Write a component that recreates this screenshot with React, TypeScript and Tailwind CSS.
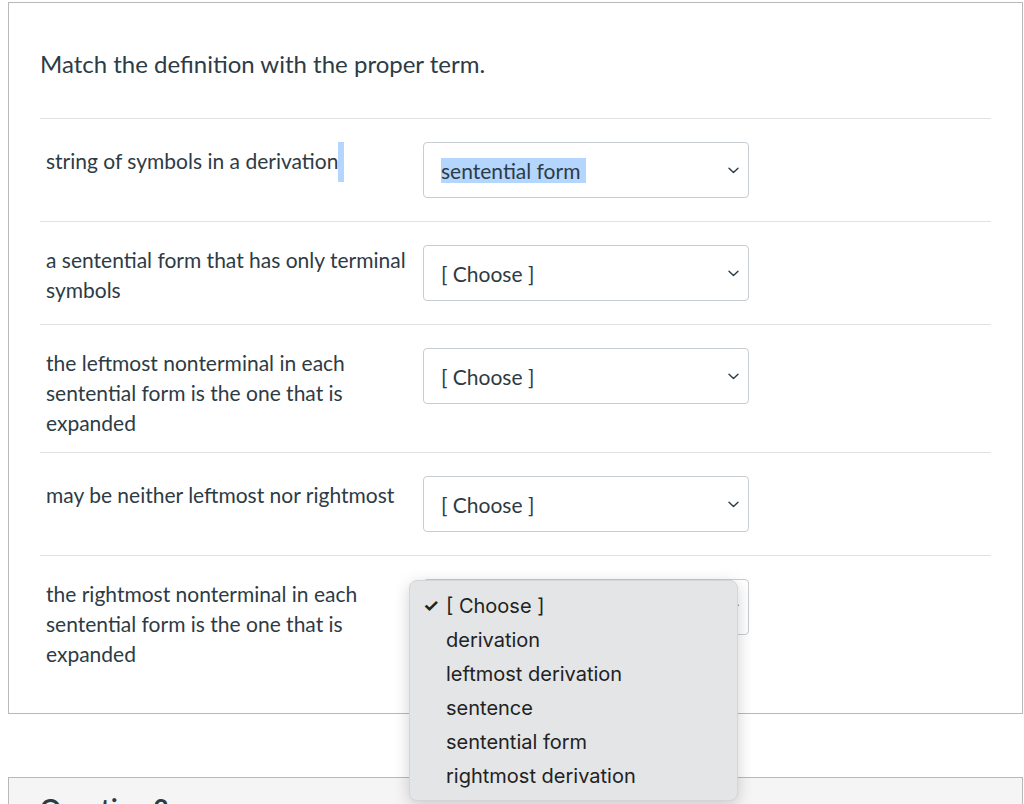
import React from 'react';

type Row = {
    definition: string;
    value: string;
    singleLine?: boolean;
};

const rows: Row[] = [
    { definition: 'string of symbols in a derivation', value: 'sentential form', singleLine: true },
    { definition: 'a sentential form that has only terminal symbols', value: '[ Choose ]' },
    { definition: 'the leftmost nonterminal in each sentential form is the one that is expanded', value: '[ Choose ]' },
    { definition: 'may be neither leftmost nor rightmost', value: '[ Choose ]', singleLine: true },
    { definition: 'the rightmost nonterminal in each sentential form is the one that is expanded', value: '' },
];

const options = ['[ Choose ]', 'derivation', 'leftmost derivation', 'sentence', 'sentential form', 'rightmost derivation'];

const Chevron: React.FC = () => (
    <svg width="11" height="7" viewBox="0 0 11 7" fill="none" className="shrink-0">
        <path d="M1 1.2L5.5 5.6L10 1.2" stroke="#2d3b45" strokeWidth="1.4" strokeLinecap="round" strokeLinejoin="round" />
    </svg>
);

const App: React.FC = () => {
    return (
        <div className="relative h-[804px] bg-white overflow-hidden font-['Lato','Noto_Sans',sans-serif] text-[#2d3b45]">
            {/* Question 1 card */}
            <div className="mt-[2px] ml-2 mr-[1px] border border-[#b9b9b9] px-[31px] pt-[44px] pb-[30px]">
                <h2 className="text-[24px] leading-[33px] mb-[38px]">Match the definition with the proper term.</h2>

                {rows.map((row, i) => (
                    <div key={i} className="flex border-t border-[#e1e1e1] pt-[23px] pb-[14px]">
                        <div className={`w-[383px] pl-[6px] pr-[13px] text-[21px] leading-[30px] ${row.singleLine ? 'pt-[4px]' : ''}`}>
                            {row.definition}
                            {i === 0 && (
                                <span className="relative inline-block w-[6px] h-[30px] align-top">
                                    <span className="absolute left-0 top-[-4px] w-[6px] h-[40px] bg-[#b4d5fe]" />
                                </span>
                            )}
                        </div>
                        <div className="w-[326px] h-[56px] mb-[9px] border border-[#c7cdd1] rounded-[4px] bg-white flex items-center justify-between pl-[17px] pr-[9px]">
                            <span className="text-[21px] leading-[25px]">
                                {i === 0 ? <span className="bg-[#b4d5fe]">{row.value}&nbsp;</span> : row.value}
                            </span>
                            <Chevron />
                        </div>
                    </div>
                ))}
            </div>

            {/* Question 2 card, cut off at the bottom */}
            <div className="mt-[63px] ml-2 mr-[1px] border border-[#b9b9b9] bg-[#f5f5f5] px-[31px] pt-[15px] h-[60px] flex justify-between">
                <span className="text-[26px] leading-[30px] font-bold">Question 2</span>
                <span className="text-[20px] leading-[30px] font-bold pr-[20px] pt-[3px]">1 pts</span>
            </div>

            {/* Open native select menu */}
            <div className="absolute left-[409px] top-[580px] w-[329px] h-[221px] rounded-[8px] bg-[#e3e5e7] shadow-[0_4px_16px_rgba(0,0,0,0.18)] border border-[#d3d5d8] pt-[8px] font-['Inter','Liberation_Sans',sans-serif] text-[20px] text-[#222222]">
                {options.map((opt, i) => (
                    <div key={opt} className="flex items-center h-[34px] leading-[34px]">
                        <span className="w-[36px] pl-[13px] text-[18px] font-bold">{i === 0 ? '✓' : ''}</span>
                        <span>{opt}</span>
                    </div>
                ))}
            </div>
        </div>
    );
};

export default App;
